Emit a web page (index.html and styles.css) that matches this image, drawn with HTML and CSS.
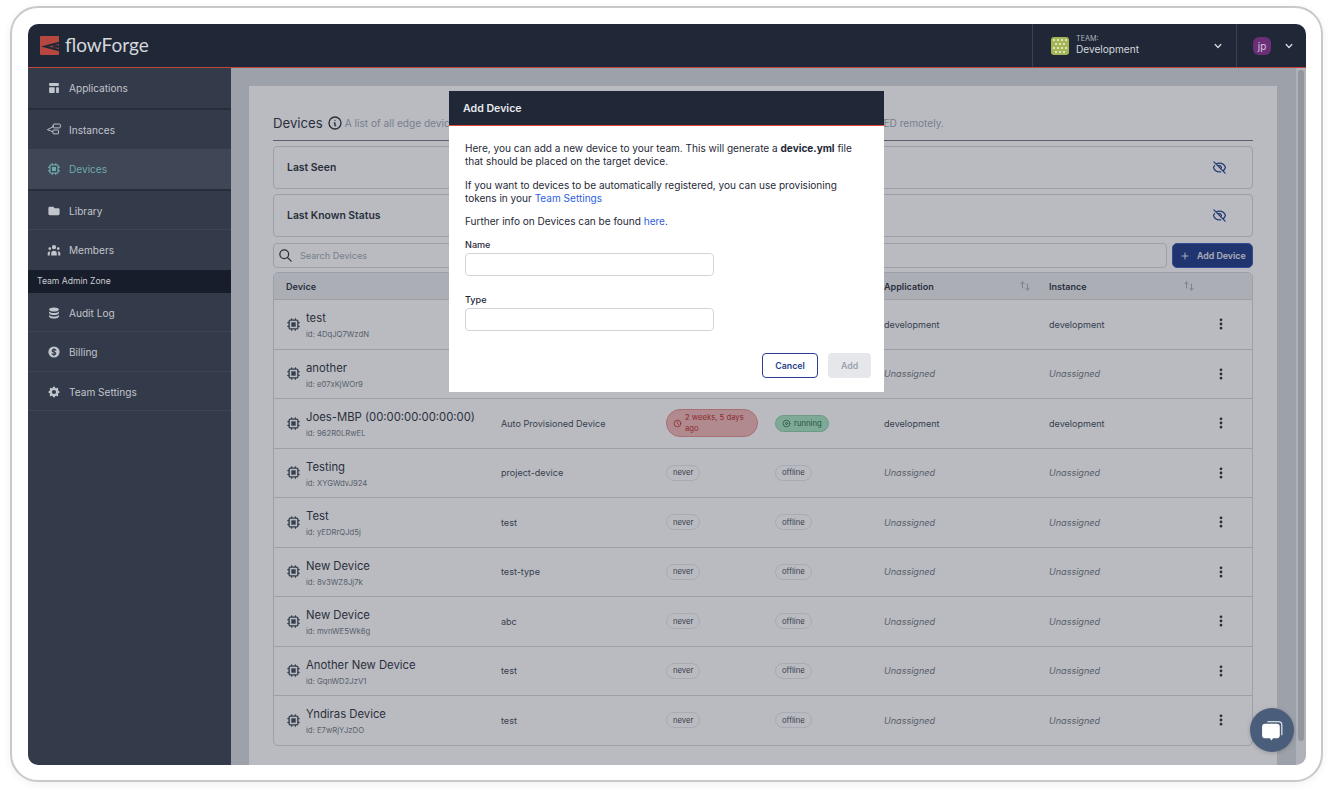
FILE: index.html
```html
<!DOCTYPE html>
<html lang="en">
<head>
  <meta charset="UTF-8">
  <title>FlowForge - Devices</title>
  <link rel="stylesheet" href="styles.css">
</head>
<body>
<svg class="sprite" xmlns="http://www.w3.org/2000/svg">
  <symbol id="i-chip" viewBox="0 0 24 24"><path fill="none" stroke="currentColor" stroke-width="2.2" stroke-linecap="round" stroke-linejoin="round" d="M9 3v2m6-2v2M9 19v2m6-2v2M5 9H3m2 6H3m18-6h-2m2 6h-2M7 19h10a2 2 0 002-2V7a2 2 0 00-2-2H7a2 2 0 00-2 2v10a2 2 0 002 2z"/><rect x="8.5" y="8.5" width="7" height="7" fill="currentColor"/></symbol>
  <symbol id="i-dots" viewBox="0 0 20 20"><path fill="currentColor" d="M10 6a2 2 0 110-4 2 2 0 010 4zM10 12a2 2 0 110-4 2 2 0 010 4zM10 18a2 2 0 110-4 2 2 0 010 4z"/></symbol>
  <symbol id="i-eye-off" viewBox="0 0 24 24"><path fill="none" stroke="currentColor" stroke-width="2" stroke-linecap="round" stroke-linejoin="round" d="M13.875 18.825A10.05 10.05 0 0112 19c-4.478 0-8.268-2.943-9.543-7a9.97 9.97 0 011.563-3.029m5.858.908a3 3 0 114.243 4.243M9.878 9.878l4.242 4.242M9.88 9.88l-3.29-3.29m7.532 7.532l3.29 3.29M3 3l3.59 3.59m0 0A9.953 9.953 0 0112 5c4.478 0 8.268 2.943 9.543 7a10.025 10.025 0 01-4.132 5.411m0 0L21 21"/></symbol>
  <symbol id="i-sort" viewBox="0 0 24 24"><path fill="none" stroke="currentColor" stroke-width="2" stroke-linecap="round" stroke-linejoin="round" d="M7 16V4m0 0L3 8m4-4l4 4m6 0v12m0 0l4-4m-4 4l-4-4"/></symbol>
  <symbol id="i-chevron" viewBox="0 0 20 20"><path fill="currentColor" d="M5.293 7.293a1 1 0 011.414 0L10 10.586l3.293-3.293a1 1 0 111.414 1.414l-4 4a1 1 0 01-1.414 0l-4-4a1 1 0 010-1.414z"/></symbol>
</svg>

<div class="frame">
  <div class="app">
    <header class="topbar">
      <div class="brand">
        <svg class="brand-mark" viewBox="0 0 19 19">
          <rect width="19" height="19" rx="1" fill="#b8473f"/>
          <path d="M20 6.5 L5 10.5 L20 14.5" fill="none" stroke="#202837" stroke-width="2.2"/>
          <path d="M20 10.5 L13 10.5" stroke="#202837" stroke-width="2.6"/>
        </svg>
        <span class="brand-name">flowForge</span>
      </div>
      <div class="team-switch">
        <svg class="team-avatar" viewBox="0 0 18 18">
          <rect width="18" height="18" rx="3" fill="#a3b556"/>
          <g fill="#dfe6bd">
            <rect x="2" y="2" width="2" height="2"/><rect x="6" y="2" width="2" height="2"/><rect x="10" y="2" width="2" height="2"/><rect x="14" y="2" width="2" height="2"/>
            <rect x="4" y="6" width="2" height="2"/><rect x="8" y="6" width="2" height="2"/><rect x="12" y="6" width="2" height="2"/>
            <rect x="2" y="10" width="2" height="2"/><rect x="6" y="10" width="2" height="2"/><rect x="10" y="10" width="2" height="2"/><rect x="14" y="10" width="2" height="2"/>
            <rect x="4" y="14" width="2" height="2"/><rect x="8" y="14" width="2" height="2"/><rect x="12" y="14" width="2" height="2"/>
          </g>
        </svg>
        <div class="team-text">
          <span class="team-label">TEAM:</span>
          <span class="team-name">Development</span>
        </div>
        <svg class="chevron"><use href="#i-chevron"/></svg>
      </div>
      <div class="user-switch">
        <span class="user-avatar">jp</span>
        <svg class="chevron"><use href="#i-chevron"/></svg>
      </div>
    </header>

    <div class="body-row">
      <nav class="sidebar">
        <a class="nav-item nav-sep-strong">
          <svg class="nav-icon" viewBox="0 0 20 20"><path fill="currentColor" d="M3 4a1 1 0 011-1h12a1 1 0 011 1v2a1 1 0 01-1 1H4a1 1 0 01-1-1V4zM3 10a1 1 0 011-1h6a1 1 0 011 1v6a1 1 0 01-1 1H4a1 1 0 01-1-1v-6zM14 9a1 1 0 00-1 1v6a1 1 0 001 1h2a1 1 0 001-1v-6a1 1 0 00-1-1h-2z"/></svg>
          Applications
        </a>
        <a class="nav-item nav-plain">
          <svg class="nav-icon" viewBox="0 0 20 20"><g fill="none" stroke="currentColor" stroke-width="1.4" stroke-linejoin="round"><path d="M8.5 5.5 L0.5 9.5 L8.5 12.5"/><rect x="9" y="1.5" width="10" height="5.5" rx="1"/><rect x="8.5" y="10" width="8" height="5.5" rx="1"/><path d="M9 4.5 H7"/></g></svg>
          Instances
        </a>
        <a class="nav-item nav-active nav-sep-strong">
          <svg class="nav-icon"><use href="#i-chip"/></svg>
          Devices
        </a>
        <a class="nav-item">
          <svg class="nav-icon" viewBox="0 0 20 20"><path fill="currentColor" d="M2 6a2 2 0 012-2h5l2 2h5a2 2 0 012 2v6a2 2 0 01-2 2H4a2 2 0 01-2-2V6z"/></svg>
          Library
        </a>
        <a class="nav-item nav-last">
          <svg class="nav-icon" viewBox="0 0 20 20"><path fill="currentColor" d="M13 6a3 3 0 11-6 0 3 3 0 016 0zM18 8a2 2 0 11-4 0 2 2 0 014 0zM14 15a4 4 0 00-8 0v3h8v-3zM6 8a2 2 0 11-4 0 2 2 0 014 0zM16 18v-3a5.972 5.972 0 00-.75-2.906A3.005 3.005 0 0119 15v3h-3zM4.75 12.094A5.973 5.973 0 004 15v3H1v-3a3 3 0 013.75-2.906z"/></svg>
          Members
        </a>
        <div class="nav-zone">Team Admin Zone</div>
        <a class="nav-item">
          <svg class="nav-icon" viewBox="0 0 20 20"><path fill="currentColor" d="M3 12v3c0 1.657 3.134 3 7 3s7-1.343 7-3v-3c0 1.657-3.134 3-7 3s-7-1.343-7-3zM3 7v3c0 1.657 3.134 3 7 3s7-1.343 7-3V7c0 1.657-3.134 3-7 3S3 8.657 3 7zM17 5c0 1.657-3.134 3-7 3S3 6.657 3 5s3.134-3 7-3 7 1.343 7 3z"/></svg>
          Audit Log
        </a>
        <a class="nav-item">
          <svg class="nav-icon" viewBox="0 0 20 20"><circle cx="10" cy="10" r="8" fill="currentColor"/><path fill="none" stroke="#333a4a" stroke-width="1.6" stroke-linecap="round" d="M12.6 7.4C12 6.6 11 6.2 10 6.2 8.5 6.2 7.4 7 7.4 8.1 7.4 10.6 12.6 9.4 12.6 11.9 12.6 13 11.5 13.8 10 13.8 9 13.8 8 13.4 7.4 12.6M10 5v10"/></svg>
          Billing
        </a>
        <a class="nav-item">
          <svg class="nav-icon" viewBox="0 0 20 20"><path fill="currentColor" fill-rule="evenodd" d="M11.49 3.17c-.38-1.56-2.6-1.56-2.98 0a1.532 1.532 0 01-2.286.948c-1.372-.836-2.942.734-2.106 2.106.54.886.061 2.042-.947 2.287-1.561.379-1.561 2.6 0 2.978a1.532 1.532 0 01.947 2.287c-.836 1.372.734 2.942 2.106 2.106a1.532 1.532 0 012.287.947c.379 1.561 2.6 1.561 2.978 0a1.533 1.533 0 012.287-.947c1.372.836 2.942-.734 2.106-2.106a1.533 1.533 0 01.947-2.287c1.561-.379 1.561-2.6 0-2.978a1.532 1.532 0 01-.947-2.287c.836-1.372-.734-2.942-2.106-2.106a1.532 1.532 0 01-2.287-.947zM10 13a3 3 0 100-6 3 3 0 000 6z"/></svg>
          Team Settings
        </a>
      </nav>

      <main class="main">
        <section class="card">
          <div class="page-title">
            <h1>Devices</h1>
            <svg class="info-icon" viewBox="0 0 24 24"><path fill="none" stroke="currentColor" stroke-width="2" stroke-linecap="round" stroke-linejoin="round" d="M13 16h-1v-4h-1m1-4h.01M21 12a9 9 0 11-18 0 9 9 0 0118 0z"/></svg>
            <span class="page-sub">A list of all edge devices registered in your team. Manage and deploy new flows to all of your devices via Node-RED remotely.</span>
          </div>

          <div class="filter-box">
            <span>Last Seen</span>
            <svg class="eye-icon"><use href="#i-eye-off"/></svg>
          </div>
          <div class="filter-box">
            <span>Last Known Status</span>
            <svg class="eye-icon"><use href="#i-eye-off"/></svg>
          </div>

          <div class="search-row">
            <div class="search-box">
              <svg class="search-icon" viewBox="0 0 24 24"><path fill="none" stroke="currentColor" stroke-width="2" stroke-linecap="round" stroke-linejoin="round" d="M21 21l-6-6m2-5a7 7 0 11-14 0 7 7 0 0114 0z"/></svg>
              <span>Search Devices</span>
            </div>
            <button class="btn-add">
              <svg viewBox="0 0 20 20"><path fill="none" stroke="currentColor" stroke-width="2" stroke-linecap="round" d="M10 4v12M4 10h12"/></svg>
              Add Device
            </button>
          </div>

          <div class="table">
            <div class="row row-head">
              <div class="cell cell-first">Device</div>
              <div class="cell">Type</div>
              <div class="cell">Last Seen</div>
              <div class="cell">Last Known Status</div>
              <div class="cell cell-sort">Application <svg class="sort-icon"><use href="#i-sort"/></svg></div>
              <div class="cell cell-sort">Instance <svg class="sort-icon"><use href="#i-sort"/></svg></div>
              <div class="cell"></div>
            </div>

            <div class="row">
              <div class="cell cell-device"><svg class="chip-icon"><use href="#i-chip"/></svg><div class="dev-text"><div class="dev-name">test</div><div class="dev-id">id: 4DqJQ7WzdN</div></div></div>
              <div class="cell">test</div>
              <div class="cell"><span class="pill">never</span></div>
              <div class="cell"><span class="pill">offline</span></div>
              <div class="cell">development</div>
              <div class="cell">development</div>
              <div class="cell cell-menu"><svg class="dots"><use href="#i-dots"/></svg></div>
            </div>
            <div class="row">
              <div class="cell cell-device"><svg class="chip-icon"><use href="#i-chip"/></svg><div class="dev-text"><div class="dev-name">another</div><div class="dev-id">id: e07xKjWOr9</div></div></div>
              <div class="cell">test</div>
              <div class="cell"><span class="pill">never</span></div>
              <div class="cell"><span class="pill">offline</span></div>
              <div class="cell cell-muted">Unassigned</div>
              <div class="cell cell-muted">Unassigned</div>
              <div class="cell cell-menu"><svg class="dots"><use href="#i-dots"/></svg></div>
            </div>
            <div class="row">
              <div class="cell cell-device"><svg class="chip-icon"><use href="#i-chip"/></svg><div class="dev-text"><div class="dev-name">Joes-MBP (00:00:00:00:00:00)</div><div class="dev-id">id: 962R0LRwEL</div></div></div>
              <div class="cell">Auto Provisioned Device</div>
              <div class="cell"><span class="pill pill-error"><svg viewBox="0 0 24 24"><path fill="none" stroke="currentColor" stroke-width="2" stroke-linecap="round" stroke-linejoin="round" d="M12 8v4l3 3m6-3a9 9 0 11-18 0 9 9 0 0118 0z"/></svg><span>2 weeks, 5 days ago</span></span></div>
              <div class="cell"><span class="pill pill-ok"><svg viewBox="0 0 24 24"><path fill="none" stroke="currentColor" stroke-width="2" stroke-linecap="round" stroke-linejoin="round" d="M14.752 11.168l-3.197-2.132A1 1 0 0010 9.87v4.263a1 1 0 001.555.832l3.197-2.132a1 1 0 000-1.664zM21 12a9 9 0 11-18 0 9 9 0 0118 0z"/></svg>running</span></div>
              <div class="cell">development</div>
              <div class="cell">development</div>
              <div class="cell cell-menu"><svg class="dots"><use href="#i-dots"/></svg></div>
            </div>
            <div class="row">
              <div class="cell cell-device"><svg class="chip-icon"><use href="#i-chip"/></svg><div class="dev-text"><div class="dev-name">Testing</div><div class="dev-id">id: XYGWdvJ924</div></div></div>
              <div class="cell">project-device</div>
              <div class="cell"><span class="pill">never</span></div>
              <div class="cell"><span class="pill">offline</span></div>
              <div class="cell cell-muted">Unassigned</div>
              <div class="cell cell-muted">Unassigned</div>
              <div class="cell cell-menu"><svg class="dots"><use href="#i-dots"/></svg></div>
            </div>
            <div class="row">
              <div class="cell cell-device"><svg class="chip-icon"><use href="#i-chip"/></svg><div class="dev-text"><div class="dev-name">Test</div><div class="dev-id">id: yEDRrQJd5j</div></div></div>
              <div class="cell">test</div>
              <div class="cell"><span class="pill">never</span></div>
              <div class="cell"><span class="pill">offline</span></div>
              <div class="cell cell-muted">Unassigned</div>
              <div class="cell cell-muted">Unassigned</div>
              <div class="cell cell-menu"><svg class="dots"><use href="#i-dots"/></svg></div>
            </div>
            <div class="row">
              <div class="cell cell-device"><svg class="chip-icon"><use href="#i-chip"/></svg><div class="dev-text"><div class="dev-name">New Device</div><div class="dev-id">id: 8v3WZ8Jj7k</div></div></div>
              <div class="cell">test-type</div>
              <div class="cell"><span class="pill">never</span></div>
              <div class="cell"><span class="pill">offline</span></div>
              <div class="cell cell-muted">Unassigned</div>
              <div class="cell cell-muted">Unassigned</div>
              <div class="cell cell-menu"><svg class="dots"><use href="#i-dots"/></svg></div>
            </div>
            <div class="row">
              <div class="cell cell-device"><svg class="chip-icon"><use href="#i-chip"/></svg><div class="dev-text"><div class="dev-name">New Device</div><div class="dev-id">id: mvnWE5Wk6g</div></div></div>
              <div class="cell">abc</div>
              <div class="cell"><span class="pill">never</span></div>
              <div class="cell"><span class="pill">offline</span></div>
              <div class="cell cell-muted">Unassigned</div>
              <div class="cell cell-muted">Unassigned</div>
              <div class="cell cell-menu"><svg class="dots"><use href="#i-dots"/></svg></div>
            </div>
            <div class="row">
              <div class="cell cell-device"><svg class="chip-icon"><use href="#i-chip"/></svg><div class="dev-text"><div class="dev-name">Another New Device</div><div class="dev-id">id: GqnWD2JzV1</div></div></div>
              <div class="cell">test</div>
              <div class="cell"><span class="pill">never</span></div>
              <div class="cell"><span class="pill">offline</span></div>
              <div class="cell cell-muted">Unassigned</div>
              <div class="cell cell-muted">Unassigned</div>
              <div class="cell cell-menu"><svg class="dots"><use href="#i-dots"/></svg></div>
            </div>
            <div class="row">
              <div class="cell cell-device"><svg class="chip-icon"><use href="#i-chip"/></svg><div class="dev-text"><div class="dev-name">Yndiras Device</div><div class="dev-id">id: E7wRjYJzDO</div></div></div>
              <div class="cell">test</div>
              <div class="cell"><span class="pill">never</span></div>
              <div class="cell"><span class="pill">offline</span></div>
              <div class="cell cell-muted">Unassigned</div>
              <div class="cell cell-muted">Unassigned</div>
              <div class="cell cell-menu"><svg class="dots"><use href="#i-dots"/></svg></div>
            </div>
          </div>
        </section>
        <div class="scroll-track"><div class="scroll-thumb"></div></div>
        <div class="scrim"></div>
      </main>
    </div>
  </div>

  <div class="dialog">
    <div class="dialog-head">Add Device</div>
    <div class="dialog-body">
      <p>Here, you can add a new device to your team. This will generate a <b>device.yml</b> file that should be placed on the target device.</p>
      <p>If you want to devices to be automatically registered, you can use provisioning tokens in your <a>Team Settings</a></p>
      <p>Further info on Devices can be found <a>here</a>.</p>
      <label class="field-label">Name</label>
      <div class="field-input"></div>
      <label class="field-label field-label-next">Type</label>
      <div class="field-input"></div>
      <div class="dialog-actions">
        <button class="btn-cancel">Cancel</button>
        <button class="btn-disabled">Add</button>
      </div>
    </div>
  </div>

  <div class="chat-bubble">
    <svg viewBox="0 0 24 24">
      <path fill="none" stroke="#fff" stroke-width="1" d="M7 3.5h11a3 3 0 013 3v10"/>
      <path fill="#fff" d="M5 5.5h11a3 3 0 013 3v8a3 3 0 01-3 3h-3.5L11 21.5 9.5 19.5H5a3 3 0 01-3-3v-8a3 3 0 013-3z"/>
    </svg>
  </div>
</div>
</body>
</html>
```

FILE: styles.css
```css
* {
  box-sizing: border-box;
}
html, body {
  margin: 0;
  padding: 0;
  background: #fff;
  height: 100%;
  overflow: hidden;
  font-family: Inter, "Liberation Sans", sans-serif;
}
.sprite {
  display: none;
}
.frame {
  position: relative;
  width: 1313px;
  height: 776px;
  margin: 6px 0 0 10px;
  padding: 16px 15px 15px 16px;
  background: #fff;
  border: 2px solid #c9c9c9;
  border-radius: 28px;
  box-shadow: 0 2px 8px rgba(0, 0, 0, 0.06);
}
.app {
  display: flex;
  flex-direction: column;
  height: 100%;
  border-radius: 10px;
  overflow: hidden;
}

/* top bar */
.topbar {
  display: flex;
  align-items: stretch;
  height: 44px;
  flex-shrink: 0;
  background: #202837;
  border-bottom: 1px solid #c0443e;
  color: #e5e7eb;
}
.brand {
  display: flex;
  align-items: center;
  flex: 1;
  padding-left: 12px;
  gap: 6px;
}
.brand-mark {
  width: 19px;
  height: 19px;
}
.brand-name {
  margin-top: -2px;
  font-family: Lato, sans-serif;
  font-size: 19px;
  line-height: 20px;
  color: #d5d7db;
}
.team-switch {
  display: flex;
  align-items: center;
  width: 204px;
  padding: 0 11px 0 18px;
  border-left: 1px solid #3a4150;
}
.team-avatar {
  width: 18px;
  height: 18px;
  margin-right: 7px;
}
.team-text {
  display: flex;
  flex-direction: column;
  flex: 1;
}
.team-label {
  font-size: 7.2px;
  line-height: 8px;
  color: #aeb3bc;
}
.team-name {
  font-size: 10.1px;
  line-height: 13px;
  color: #d5d8dd;
}
.chevron {
  width: 14px;
  height: 14px;
  color: #d5d8dd;
}
.user-switch {
  display: flex;
  align-items: center;
  width: 70px;
  padding-left: 16px;
  border-left: 1px solid #3a4150;
  gap: 11px;
}
.user-avatar {
  display: flex;
  align-items: center;
  justify-content: center;
  width: 18px;
  height: 18px;
  border-radius: 6px;
  background: #6b2f78;
  color: #d9c6dd;
  font-size: 10px;
}

/* sidebar */
.body-row {
  display: flex;
  flex: 1;
  min-height: 0;
}
.sidebar {
  width: 203px;
  flex-shrink: 0;
  background: #333a4a;
  color: #c2c5cb;
  font-size: 10.1px;
}
.nav-item {
  display: flex;
  align-items: center;
  height: 39.5px;
  padding-left: 18px;
  padding-top: 2px;
  gap: 8px;
  border-bottom: 1px solid #3d4454;
}
.nav-sep-strong {
  height: 41.5px;
  padding-top: 0;
  border-bottom: 2px solid #272d3b;
}
.nav-plain {
  border-bottom: 0;
}
.nav-active {
  height: 41.5px;
  background: #3f4655;
  color: #6fa8ab;
}
.nav-last {
  padding-top: 0;
  border-bottom: 0;
}
.nav-icon {
  width: 14px;
  height: 14px;
  margin-left: 1px;
  flex-shrink: 0;
}
.nav-zone {
  display: flex;
  align-items: center;
  height: 23px;
  padding-left: 9px;
  background: #171d2b;
  color: #c9ccd2;
  font-size: 8.6px;
}

/* main area */
.main {
  position: relative;
  display: flex;
  flex: 1;
  min-width: 0;
  padding-left: 18px;
  background: #d4d7dc;
}
.card {
  width: 1028px;
  margin-top: 18px;
  padding: 24px 24px 0;
  flex-shrink: 0;
  background: #fff;
  color: #1f2937;
}
.scroll-track {
  width: 10px;
  margin-left: 19px;
  flex-shrink: 0;
  padding: 2px 2px 24px;
  background: #f0f1f3;
}
.scroll-thumb {
  height: 100%;
  border-radius: 3px;
  background: #c4c6c9;
}
.scrim {
  position: absolute;
  inset: 0;
  background: rgba(55, 60, 75, 0.35);
}
.page-title {
  display: flex;
  align-items: center;
  height: 31px;
  padding-bottom: 5px;
  margin-bottom: 5px;
  border-bottom: 1px solid #6b7280;
}
.page-title h1 {
  margin: 0;
  font-size: 13.2px;
  font-weight: 400;
}
.info-icon {
  width: 16px;
  height: 16px;
  margin: 0 2px 0 4px;
}
.page-sub {
  font-size: 10.1px;
  color: #9ca3af;
  white-space: nowrap;
}
.filter-box {
  display: flex;
  align-items: center;
  justify-content: space-between;
  height: 43px;
  margin-bottom: 5px;
  padding: 0 25px 0 13px;
  border: 1px solid #d1d5db;
  border-radius: 4px;
  font-size: 10.4px;
  font-weight: 600;
}
.eye-icon {
  width: 15px;
  height: 15px;
  color: #1e3a8a;
}
.search-row {
  display: flex;
  gap: 5px;
  height: 25px;
  margin-top: 6px;
  margin-bottom: 4px;
}
.search-box {
  display: flex;
  align-items: center;
  flex: 1;
  padding-left: 4px;
  gap: 7px;
  border: 1px solid #d1d5db;
  border-radius: 4px;
  color: #9ca3af;
  font-size: 9.1px;
}
.search-icon {
  width: 15px;
  height: 15px;
  color: #1f2937;
}
.btn-add {
  display: flex;
  align-items: center;
  gap: 7px;
  width: 81px;
  padding: 0 0 0 7px;
  border: 1px solid #3456b8;
  border-radius: 5px;
  background: #153084;
  color: #e8eaf2;
  font-family: inherit;
  font-size: 8.8px;
  font-weight: 600;
  white-space: nowrap;
}
.btn-add svg {
  width: 10px;
  height: 10px;
}

/* table */
.table {
  border: 1px solid #d1d5db;
  border-radius: 5px;
  overflow: hidden;
}
.row {
  display: grid;
  grid-template-columns: 214px 165px 109px 109px 165px 164px 52px;
  align-items: center;
  height: 49.5px;
  border-top: 1px solid #d1d5db;
  font-size: 9.05px;
  color: #374151;
}
.row-head {
  height: 26px;
  border-top: 0;
  background: #ebecee;
  font-weight: 600;
  font-size: 9.05px;
  color: #1f2937;
}
.cell {
  display: flex;
  align-items: center;
  padding-left: 13px;
  min-width: 0;
}
.cell-first {
  padding-left: 12px;
}
.cell-sort {
  justify-content: space-between;
  padding-right: 5px;
}
.sort-icon {
  width: 12px;
  height: 12px;
  color: #a3a7ae;
}
.cell-device {
  padding-left: 12px;
  gap: 5px;
}
.chip-icon {
  width: 15px;
  height: 15px;
  flex-shrink: 0;
  color: #374151;
}
.dev-text {
  padding-top: 3px;
}
.dev-name {
  font-size: 11.3px;
  line-height: 14px;
  color: #1f2937;
  white-space: nowrap;
}
.dev-id {
  margin-top: 5px;
  font-size: 7.7px;
  line-height: 10px;
  color: #6b7280;
}
.cell-muted {
  font-style: italic;
  color: #6b7280;
}
.cell-menu {
  padding-left: 14px;
}
.dots {
  width: 14px;
  height: 14px;
  color: #1f2937;
}
.pill {
  display: inline-flex;
  align-items: center;
  height: 16px;
  padding: 0 6px;
  border: 1px solid #e5e7eb;
  border-radius: 9px;
  font-size: 7.7px;
  color: #374151;
}
.pill svg {
  width: 9px;
  height: 9px;
  margin-right: 3px;
  flex-shrink: 0;
}
.pill-error {
  width: 92px;
  height: 28px;
  padding: 0 8px 0 6px;
  border-radius: 14px;
  border-color: #e58c8c;
  background: #f3b4b4;
  color: #b91c1c;
  line-height: 11px;
}
.pill-ok {
  height: 17px;
  border-color: #86cfa5;
  background: #a7e3c0;
  color: #166534;
}

/* dialog */
.dialog {
  position: absolute;
  left: 437px;
  top: 83px;
  width: 435px;
  height: 301px;
  background: #fff;
  color: #1f2937;
}
.dialog-head {
  display: flex;
  align-items: center;
  height: 35px;
  padding-left: 14px;
  background: #202837;
  border-bottom: 1px solid #e0483a;
  color: #e8eaee;
  font-size: 10.6px;
  font-weight: 600;
}
.dialog-body {
  padding: 16px 13px 0 16px;
  font-size: 10.05px;
  line-height: 13px;
}
.dialog-body p {
  margin: 0 0 10.5px;
}
.dialog-body p:last-of-type {
  margin-bottom: 9.5px;
}
.dialog-body b {
  font-weight: 700;
}
.dialog-body a {
  color: #2f5fe0;
}
.field-label {
  display: block;
  font-size: 9.1px;
  font-weight: 500;
  margin-bottom: 2.5px;
}
.field-label-next {
  margin-top: 16.5px;
}
.field-input {
  width: 249px;
  height: 23px;
  border: 1px solid #d1d5db;
  border-radius: 4px;
}
.dialog-actions {
  display: flex;
  justify-content: flex-end;
  gap: 10px;
  margin-top: 22px;
}
.dialog-actions button {
  height: 25px;
  border-radius: 4px;
  font-family: inherit;
  font-size: 8.8px;
  font-weight: 600;
  padding: 0;
}
.btn-cancel {
  width: 56px;
  border: 1px solid #2a3f8f;
  background: #fff;
  color: #2a3f8f;
}
.btn-disabled {
  width: 43px;
  border: 0;
  background: #e5e7eb;
  color: #9ca3af;
}

.chat-bubble {
  position: absolute;
  left: 1238px;
  top: 700px;
  display: flex;
  align-items: center;
  justify-content: center;
  width: 44px;
  height: 44px;
  border-radius: 50%;
  background: #4a5d7a;
  box-shadow: 0 1px 4px rgba(0, 0, 0, 0.2);
}
.chat-bubble svg {
  width: 25px;
  height: 25px;
}
```
